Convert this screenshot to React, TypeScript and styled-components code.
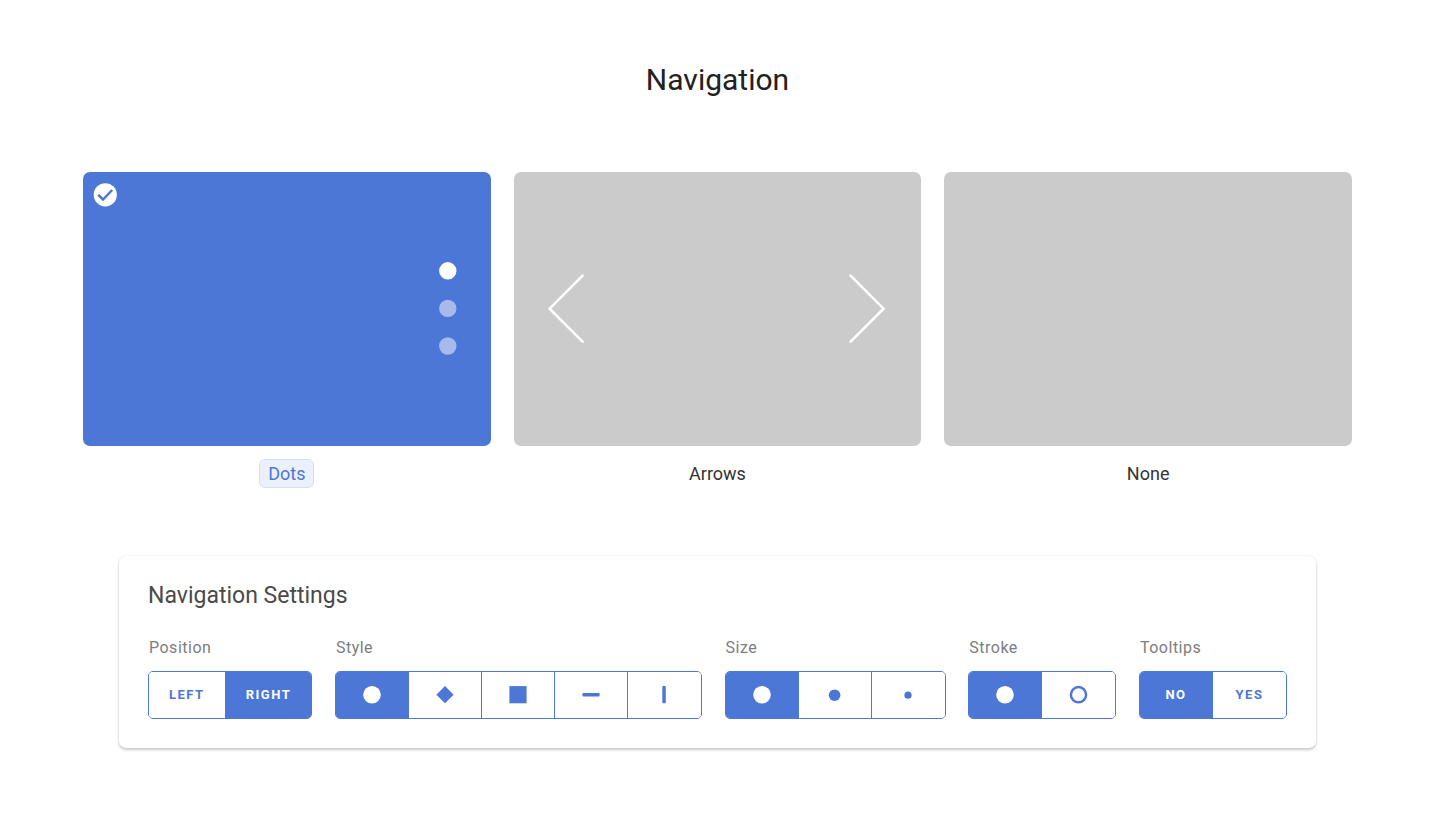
import React, { useState } from 'react';
import styled, { createGlobalStyle } from 'styled-components';

const blue = '#4c77d7';

const GlobalStyle = createGlobalStyle`
  *, *::before, *::after { box-sizing: border-box; }
  body {
    margin: 0;
    background: #fff;
    font-family: Roboto, "Liberation Sans", sans-serif;
  }
  button { font-family: inherit; cursor: pointer; }
`;

const Page = styled.main`
  padding: 60px 88px 76px 83px;
`;

const Title = styled.h1`
  margin: 0 0 72px;
  font-size: 30px;
  line-height: 40px;
  font-weight: 400;
  text-align: center;
  color: #212121;
`;

const Options = styled.div`
  display: grid;
  grid-template-columns: repeat(3, 1fr);
  gap: 23px;
`;

const Option = styled.button`
  display: flex;
  flex-direction: column;
  align-items: center;
  gap: 13px;
  padding: 0;
  border: 0;
  background: none;
`;

const Preview = styled.span<{ $active: boolean }>`
  position: relative;
  display: flex;
  align-items: center;
  justify-content: space-between;
  width: 100%;
  aspect-ratio: 149 / 100;
  padding: 0 34px;
  border-radius: 7px;
  background: ${(p) => (p.$active ? blue : '#cbcbcb')};
`;

const CheckBadge = styled.svg`
  position: absolute;
  top: 11px;
  left: 10px;
`;

const DotColumn = styled.svg`
  margin-left: auto;
`;

const OptionLabel = styled.span<{ $active: boolean }>`
  padding: 0 8px;
  border: 1px solid ${(p) => (p.$active ? '#d5dff4' : 'transparent')};
  border-radius: 6px;
  background: ${(p) => (p.$active ? '#ebf0fb' : 'transparent')};
  color: ${(p) => (p.$active ? blue : '#333')};
  font-size: 18px;
  line-height: 27px;
`;

const Panel = styled.section`
  margin: 68px 36px 0;
  padding: 25px 29px 29px;
  border-radius: 7px;
  background: #fff;
  box-shadow: 0 2px 3px rgba(0, 0, 0, 0.2), 0 0 2px rgba(0, 0, 0, 0.1);
`;

const PanelTitle = styled.h2`
  margin: 0 0 25px;
  font-size: 23px;
  line-height: 30px;
  font-weight: 400;
  color: #4a4a4a;
`;

const Settings = styled.div`
  display: flex;
  flex-wrap: wrap;
  justify-content: space-between;
  gap: 22px;
`;

const Setting = styled.div`
  display: flex;
  flex-direction: column;
  gap: 11px;
`;

const SettingLabel = styled.span`
  padding-left: 1px;
  font-size: 16px;
  line-height: 24px;
  letter-spacing: 0.5px;
  color: #7d7d7d;
`;

const Segments = styled.div`
  display: flex;
  height: 48px;
  border: 1px solid ${blue};
  border-radius: 5px;
  overflow: hidden;
`;

const Segment = styled.button<{ $active: boolean }>`
  display: flex;
  align-items: center;
  justify-content: center;
  min-width: 73px;
  padding: 0 20px;
  border: 0;
  background: ${(p) => (p.$active ? blue : '#fff')};
  color: ${(p) => (p.$active ? '#fff' : blue)};
  font-size: 13px;
  font-weight: 700;
  letter-spacing: 1.5px;

  &:not(:last-child) {
    border-right: 1px solid ${blue};
  }
`;

type Choice = { name: string; face: React.ReactNode };

const glyph = (shape: React.ReactNode) => (
  <svg width="20" height="20" viewBox="0 0 20 20" fill="currentColor" aria-hidden="true">
    {shape}
  </svg>
);

const groups: { label: string; initial: number; choices: Choice[] }[] = [
  {
    label: 'Position',
    initial: 1,
    choices: [
      { name: 'Left', face: 'LEFT' },
      { name: 'Right', face: 'RIGHT' },
    ],
  },
  {
    label: 'Style',
    initial: 0,
    choices: [
      { name: 'Circle', face: glyph(<circle cx="10" cy="9.7" r="8.8" />) },
      { name: 'Diamond', face: glyph(<path d="M10 1.1 18.6 9.7 10 18.3 1.4 9.7Z" />) },
      { name: 'Square', face: glyph(<rect x="1.4" y="1.1" width="17.2" height="17.2" />) },
      { name: 'Dash', face: glyph(<rect x="1.4" y="8" width="17.2" height="3.5" rx="1" />) },
      { name: 'Bar', face: glyph(<rect x="8.3" y="1.1" width="3.5" height="17.2" rx="1" />) },
    ],
  },
  {
    label: 'Size',
    initial: 0,
    choices: [
      { name: 'Large', face: glyph(<circle cx="10" cy="9.7" r="8.8" />) },
      { name: 'Medium', face: glyph(<circle cx="9.6" cy="10.2" r="5.8" />) },
      { name: 'Small', face: glyph(<circle cx="10" cy="10.2" r="3.6" />) },
    ],
  },
  {
    label: 'Stroke',
    initial: 0,
    choices: [
      { name: 'Filled', face: glyph(<circle cx="10" cy="9.7" r="8.8" />) },
      {
        name: 'Outlined',
        face: glyph(
          <circle cx="9.5" cy="9.7" r="7.6" fill="none" stroke="currentColor" strokeWidth="2.5" />
        ),
      },
    ],
  },
  {
    label: 'Tooltips',
    initial: 0,
    choices: [
      { name: 'No', face: 'NO' },
      { name: 'Yes', face: 'YES' },
    ],
  },
];

function SegmentedControl({ label, initial, choices }: (typeof groups)[number]) {
  const [selected, setSelected] = useState(initial);
  const id = `setting-${label.toLowerCase()}`;
  return (
    <Setting role="group" aria-labelledby={id}>
      <SettingLabel id={id}>{label}</SettingLabel>
      <Segments>
        {choices.map((choice, i) => (
          <Segment
            key={choice.name}
            type="button"
            $active={i === selected}
            aria-pressed={i === selected}
            aria-label={choice.name}
            onClick={() => setSelected(i)}
          >
            {choice.face}
          </Segment>
        ))}
      </Segments>
    </Setting>
  );
}

const Chevron = ({ d }: { d: string }) => (
  <svg width="38" height="70" viewBox="0 0 38 70" fill="none" stroke="#fff" strokeWidth="2.6" strokeLinecap="round" aria-hidden="true">
    <path d={d} />
  </svg>
);

const previews: { label: string; art: React.ReactNode }[] = [
  {
    label: 'Dots',
    art: (
      <DotColumn width="18" height="94" viewBox="0 0 18 94" fill="#fff" aria-hidden="true">
        <circle cx="8.8" cy="8.8" r="8.7" />
        <circle cx="8.8" cy="46.4" r="8.7" fillOpacity="0.5" />
        <circle cx="8.8" cy="84" r="8.7" fillOpacity="0.5" />
      </DotColumn>
    ),
  },
  {
    label: 'Arrows',
    art: (
      <>
        <Chevron d="M34.6 1.7 1.6 34.7 34.6 67.7" />
        <Chevron d="M1.6 1.7 34.6 34.7 1.6 67.7" />
      </>
    ),
  },
  { label: 'None', art: null },
];

export default function App() {
  const [selected, setSelected] = useState(0);
  return (
    <>
      <GlobalStyle />
      <Page>
        <Title>Navigation</Title>
        <Options role="group" aria-label="Navigation">
          {previews.map(({ label, art }, i) => {
            const active = i === selected;
            return (
              <Option key={label} type="button" aria-pressed={active} onClick={() => setSelected(i)}>
                <Preview $active={active}>
                  {active && (
                    <CheckBadge width="24" height="24" viewBox="0 0 24 24" aria-hidden="true">
                      <circle cx="12.3" cy="11.8" r="11.6" fill="#fff" />
                      <path d="M5.2 11.8 10 16.5 19.2 7" fill="none" stroke={blue} strokeWidth="2.5" />
                    </CheckBadge>
                  )}
                  {art}
                </Preview>
                <OptionLabel $active={active}>{label}</OptionLabel>
              </Option>
            );
          })}
        </Options>
        <Panel>
          <PanelTitle>Navigation Settings</PanelTitle>
          <Settings>
            {groups.map((group) => (
              <SegmentedControl key={group.label} {...group} />
            ))}
          </Settings>
        </Panel>
      </Page>
    </>
  );
}
